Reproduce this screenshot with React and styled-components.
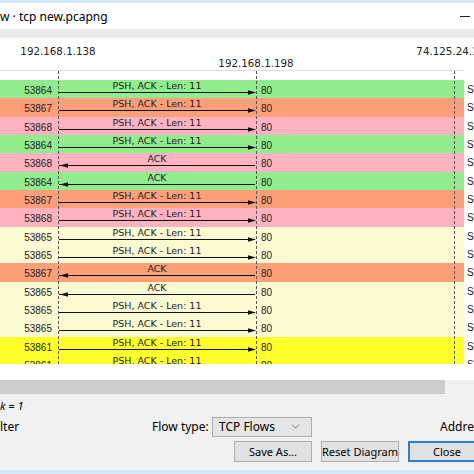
import styled, { createGlobalStyle } from "styled-components";
import { ChevronDown } from "lucide-react";

//global
const GlobalStyle = createGlobalStyle`
  html, body {
    margin: 0;
    width: 474px;
    height: 474px;
    overflow: hidden;
    background: #fff;
  }
`;

//colours for the flow rows
const rowColors = {
  green: "#90ec8c",
  salmon: "#fd9f78",
  pink: "#ffb3c1",
  cream: "#fafad2",
  yellow: "#ffff2a",
};

const flows = [
  { port: "53864", color: "green", dir: "right", label: "PSH, ACK - Len: 11", comment: "Seq = 1 Ack = 1" },
  { port: "53867", color: "salmon", dir: "right", label: "PSH, ACK - Len: 11", comment: "Seq = 1 Ack = 1" },
  { port: "53868", color: "pink", dir: "right", label: "PSH, ACK - Len: 11", comment: "Seq = 1 Ack = 1" },
  { port: "53864", color: "green", dir: "right", label: "PSH, ACK - Len: 11", comment: "Seq = 12 Ack = 1" },
  { port: "53868", color: "pink", dir: "left", label: "ACK", comment: "Seq = 1 Ack = 12" },
  { port: "53864", color: "green", dir: "left", label: "ACK", comment: "Seq = 1 Ack = 23" },
  { port: "53867", color: "salmon", dir: "right", label: "PSH, ACK - Len: 11", comment: "Seq = 12 Ack = 1" },
  { port: "53868", color: "pink", dir: "right", label: "PSH, ACK - Len: 11", comment: "Seq = 12 Ack = 1" },
  { port: "53865", color: "cream", dir: "right", label: "PSH, ACK - Len: 11", comment: "Seq = 1 Ack = 1" },
  { port: "53865", color: "cream", dir: "right", label: "PSH, ACK - Len: 11", comment: "Seq = 12 Ack = 1" },
  { port: "53867", color: "salmon", dir: "left", label: "ACK", comment: "Seq = 1 Ack = 23" },
  { port: "53865", color: "cream", dir: "left", label: "ACK", comment: "Seq = 1 Ack = 23" },
  { port: "53865", color: "cream", dir: "right", label: "PSH, ACK - Len: 11", comment: "Seq = 23 Ack = 1" },
  { port: "53865", color: "cream", dir: "right", label: "PSH, ACK - Len: 11", comment: "Seq = 34 Ack = 1" },
  { port: "53861", color: "yellow", dir: "right", label: "PSH, ACK - Len: 11", comment: "Seq = 1 Ack = 1" },
  { port: "53861", color: "yellow", dir: "right", label: "PSH, ACK - Len: 11", comment: "Seq = 12 Ack = 1" },
];

const Arrow = ({ dir }) => (
  <svg width="198" height="7" viewBox="0 0 198 7" style={{ display: "block" }}>
    <line x1="1" y1="3.5" x2="197" y2="3.5" stroke="#111" strokeWidth="1.2" />
    {dir === "right" ? (
      <polygon points="190,1.3 198,3.5 190,5.7" fill="#111" />
    ) : (
      <polygon points="2,3.5 10,1.3 10,5.7" fill="#111" />
    )}
  </svg>
);

const App = () => {
  return (
    <Window>
      <GlobalStyle />
      <TitleBar>
        <Title>w · tcp new.pcapng</Title>
        <Minimize />
      </TitleBar>
      <Band />
      <Header>
        <NodeLabel $low={false}>192.168.1.138</NodeLabel>
        <NodeLabel $low={true}>192.168.1.198</NodeLabel>
        <NodeLabel $low={false}>74.125.24.142</NodeLabel>
      </Header>
      <Diagram>
        <TopGap />
        {flows.map((f, i) => (
          <Row key={i}>
            <Colored $bg={rowColors[f.color]}>
              <Port>{f.port}</Port>
              <ArrowCell>
                <FlowLabel>{f.label}</FlowLabel>
                <Arrow dir={f.dir} />
              </ArrowCell>
              <DestPort>80</DestPort>
            </Colored>
            <Comment>{f.comment}</Comment>
          </Row>
        ))}
        <Lifeline $x={58} />
        <Lifeline $x={256} />
        <Lifeline $x={454} />
      </Diagram>
      <Spacer />
      <ScrollTrack>
        <ScrollThumb />
      </ScrollTrack>
      <Panel>
        <Hint>k = 1</Hint>
        <ControlRow>
          <Check>lter</Check>
          <FieldLabel>Flow type:</FieldLabel>
          <Select>
            TCP Flows
            <ChevronDown size={13} strokeWidth={1.3} color="#444" />
          </Select>
          <Address>Address:</Address>
        </ControlRow>
        <ButtonRow>
          <Button>Save As...</Button>
          <Button>Reset Diagram</Button>
          <Button $primary>Close</Button>
        </ButtonRow>
      </Panel>
      <BottomEdge />
    </Window>
  );
};

//styled components
const Window = styled.div`
  width: 474px;
  height: 474px;
  display: flex;
  flex-direction: column;
  overflow: hidden;
  font-family: "Noto Sans", "DejaVu Sans", sans-serif;
  color: #000;
`;
const TitleBar = styled.div`
  height: 26px;
  border-top: 3px solid #d5e8f7;
  display: flex;
  align-items: center;
  justify-content: space-between;
  background: #fff;
`;
const Title = styled.div`
  font-size: 12px;
  white-space: nowrap;
`;
const Minimize = styled.div`
  width: 10px;
  height: 1px;
  background: #222;
  margin-right: 4px;
`;
const Band = styled.div`
  height: 9px;
  background: #ebebeb;
`;
const Header = styled.div`
  height: 32px;
  display: grid;
  grid-template-columns: repeat(3, 198px);
  margin-left: -41px;
`;
const NodeLabel = styled.div`
  text-align: center;
  white-space: nowrap;
  font-family: "DejaVu Sans", sans-serif;
  font-size: 10.3px;
  line-height: 12px;
  color: #222;
  padding-top: ${(p) => (p.$low ? "19px" : "7px")};
`;
const Diagram = styled.div`
  position: relative;
  height: 294px;
  overflow: hidden;
`;
const TopGap = styled.div`
  width: 464px;
  height: 9px;
  box-sizing: content-box;
  border-top: 1px solid #dcdcdc;
`;
const Row = styled.div`
  display: flex;
  height: 18.33px;
`;
const Colored = styled.div`
  flex: none;
  width: 464px;
  display: grid;
  grid-template-columns: 58px 198px 208px;
  background: ${(p) => p.$bg};
`;
const Port = styled.div`
  text-align: right;
  padding: 5px 6px 0 0;
  font-family: "Liberation Sans", Arial, sans-serif;
  font-size: 10px;
  line-height: 12px;
  color: #222;
`;
const ArrowCell = styled.div`
  display: flex;
  flex-direction: column;
`;
const FlowLabel = styled.div`
  font-family: "DejaVu Sans", sans-serif;
  font-size: 9.5px;
  line-height: 11px;
  height: 9px;
  text-align: center;
  white-space: nowrap;
  color: #222;
`;
const DestPort = styled(Port)`
  text-align: left;
  padding: 5px 0 0 5px;
`;
const Comment = styled.div`
  padding: 4px 0 0 3px;
  font-family: "Liberation Sans", Arial, sans-serif;
  font-size: 10px;
  line-height: 12px;
  white-space: nowrap;
  color: #222;
`;
const Lifeline = styled.div`
  position: absolute;
  top: 1px;
  bottom: 0;
  left: ${(p) => p.$x}px;
  width: 1px;
  background: repeating-linear-gradient(to bottom, #555 0 3px, transparent 3px 5px);
`;
const Spacer = styled.div`
  height: 16px;
  background: #fff;
`;
const ScrollTrack = styled.div`
  height: 14px;
  background: #f0f0f0;
  display: flex;
`;
const ScrollThumb = styled.div`
  width: 445px;
  background: #cdcdcd;
`;
const Panel = styled.div`
  flex: 1;
  background: #f0f0f0;
  padding-top: 5px;
  font-size: 12px;
  display: flex;
  flex-direction: column;
`;
const Hint = styled.div`
  font-style: italic;
  font-size: 11px;
  line-height: 14px;
  height: 14px;
  white-space: nowrap;
`;
const ControlRow = styled.div`
  margin-top: 3px;
  height: 21px;
  display: flex;
  align-items: center;
  white-space: nowrap;
`;
const Check = styled.div`
  width: 152px;
  flex: none;
`;
const FieldLabel = styled.div`
  width: 60px;
  flex: none;
`;
const Select = styled.div`
  flex: none;
  box-sizing: border-box;
  width: 100px;
  height: 20px;
  padding: 0 9px 0 6px;
  display: flex;
  align-items: center;
  justify-content: space-between;
  background: #e5e5e5;
  border: 1px solid #adadad;
`;
const Address = styled.div`
  margin-left: 128px;
  flex: none;
`;
const ButtonRow = styled.div`
  margin-top: 4px;
  height: 21px;
  display: flex;
  gap: 9px;
  padding-left: 234px;
`;
const Button = styled.div`
  flex: none;
  box-sizing: border-box;
  width: 78px;
  height: 21px;
  display: flex;
  align-items: center;
  justify-content: center;
  background: #e1e1e1;
  border: ${(p) => (p.$primary ? "2px solid #2a7fd4" : "1px solid #adadad")};
  font-size: 11px;
  white-space: nowrap;
`;
const BottomEdge = styled.div`
  height: 4px;
  background: #d5e8f7;
`;

export default App;
